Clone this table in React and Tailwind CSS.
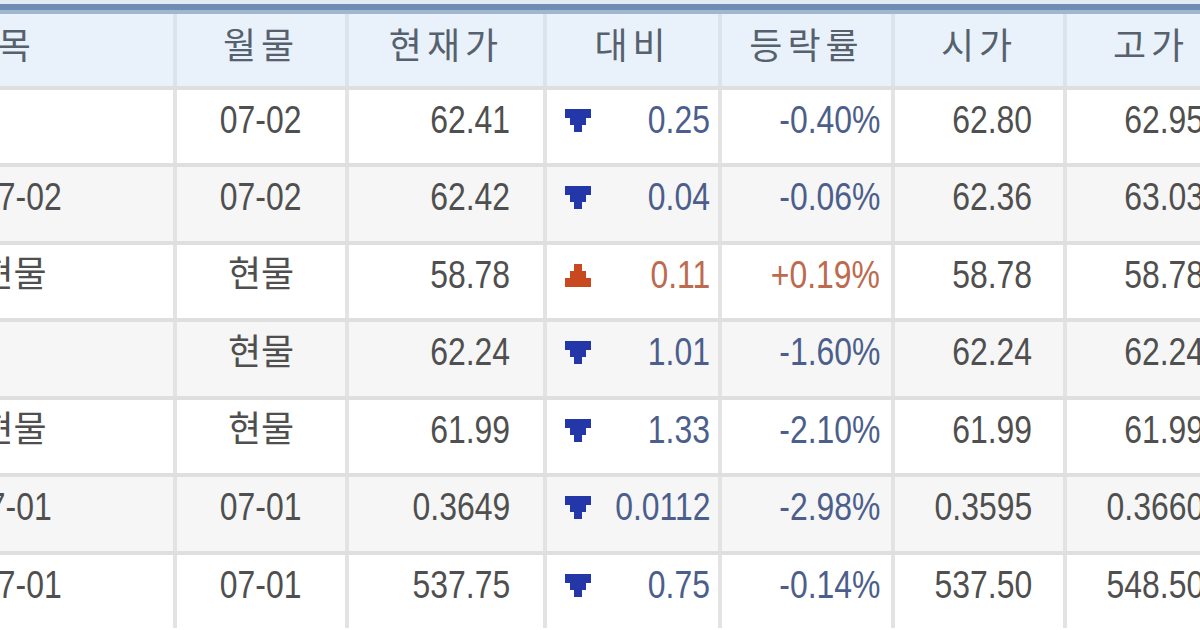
const FONT = '"Liberation Sans", "Noto Sans CJK KR", sans-serif';

const COLS = 'grid-cols-[373px_172px_198px_175px_173px_172px_172px]';

const rows = [
  { name: 'WTI', month: '07-02', price: '62.41', dir: 'down', diff: '0.25', rate: '-0.40%', open: '62.80', high: '62.95' },
  { name: 'WTI 선물 ', nameNum: '07-02', month: '07-02', price: '62.42', dir: 'down', diff: '0.04', rate: '-0.06%', open: '62.36', high: '63.03' },
  { name: '두바이유 현물', month: '현물', price: '58.78', dir: 'up', diff: '0.11', rate: '+0.19%', open: '58.78', high: '58.78' },
  { name: '오만유', month: '현물', price: '62.24', dir: 'down', diff: '1.01', rate: '-1.60%', open: '62.24', high: '62.24' },
  { name: '브렌트유 현물', month: '현물', price: '61.99', dir: 'down', diff: '1.33', rate: '-2.10%', open: '61.99', high: '61.99' },
  { name: '천연가스 ', nameNum: '07-01', month: '07-01', price: '0.3649', dir: 'down', diff: '0.0112', rate: '-2.98%', open: '0.3595', high: '0.3660' },
  { name: '대두 선물 ', nameNum: '07-01', month: '07-01', price: '537.75', dir: 'down', diff: '0.75', rate: '-0.14%', open: '537.50', high: '548.50' },
];

function Num({ children, origin = 'origin-right' }) {
  return <span className={`inline-block scale-x-[0.84] ${origin}`}>{children}</span>;
}

function Arrow({ dir }) {
  if (dir === 'up') {
    return (
      <svg width="26" height="23" viewBox="0 0 26 23" className="shrink-0">
        <path d="M9 0 H17 V7 H21 V14 H26 V23 H0 V14 H5 V7 H9 Z" fill="#c8491f" />
      </svg>
    );
  }
  return (
    <svg width="26" height="23" viewBox="0 0 26 23" className="shrink-0">
      <path d="M0 0 H26 V9 H21 V16 H17 V23 H9 V16 H5 V9 H0 Z" fill="#2437a8" />
    </svg>
  );
}

export default function App() {
  const cell = 'flex items-center pb-[12px] border-l-4 border-[#e3e3e3]';
  const head = 'flex items-center justify-center pb-[5px] border-l-4 border-[#dbe3ec] tracking-[5px]';

  return (
    <div className="w-[1200px] h-[630px] overflow-hidden bg-white" style={{ fontFamily: FONT }}>
      {/* top band */}
      <div className="h-[4px] bg-[#e2eaf3]" />
      <div className="h-[6px] bg-[#6f8cb3]" />
      <div className="h-[4px] bg-[#a3b6cf]" />

      <div className="-ml-[200px] w-[1435px]">
        {/* header */}
        <div className={`grid ${COLS} h-[71.5px] bg-[#e9f2fb] text-[36px] text-[#56616d]`}>
          <div className="flex items-center justify-end pr-[142px] pb-[5px]">종목</div>
          <div className={head}>월물</div>
          <div className={head}>현재가</div>
          <div className={head}>대비</div>
          <div className={head}>등락률</div>
          <div className={head}>시가</div>
          <div className={head}>고가</div>
        </div>

        {rows.map((r, i) => {
          const up = r.dir === 'up';
          const tone = up ? 'text-[#bd6a4e]' : 'text-[#4c5e8c]';
          return (
            <div
              key={i}
              className={`grid ${COLS} h-[77.5px] border-t-4 border-[#dfdfdf] text-[38px] text-[#4f4f4f] ${i % 2 ? 'bg-[#f6f6f6]' : 'bg-white'}`}
            >
              <div className="flex items-center pl-[38px] pb-[12px] whitespace-nowrap">
                <span className="text-[36px]">{r.name}</span>
                {r.nameNum && <Num origin="origin-left">{r.nameNum}</Num>}
              </div>
              <div className={`${cell} justify-center`}>
                {r.month === '현물' ? <span className="text-[36px]">현물</span> : <Num origin="origin-center">{r.month}</Num>}
              </div>
              <div className={`${cell} justify-end pr-[33px]`}>
                <Num>{r.price}</Num>
              </div>
              <div className={`${cell} justify-between pl-[18px] pr-[8px] ${tone}`}>
                <Arrow dir={r.dir} />
                <Num>{r.diff}</Num>
              </div>
              <div className={`${cell} justify-end pr-[11px] ${tone}`}>
                <Num>{r.rate}</Num>
              </div>
              <div className={`${cell} justify-end pr-[31px]`}>
                <Num>{r.open}</Num>
              </div>
              <div className={`${cell} justify-end pr-[31px]`}>
                <Num>{r.high}</Num>
              </div>
            </div>
          );
        })}
      </div>
    </div>
  );
}
